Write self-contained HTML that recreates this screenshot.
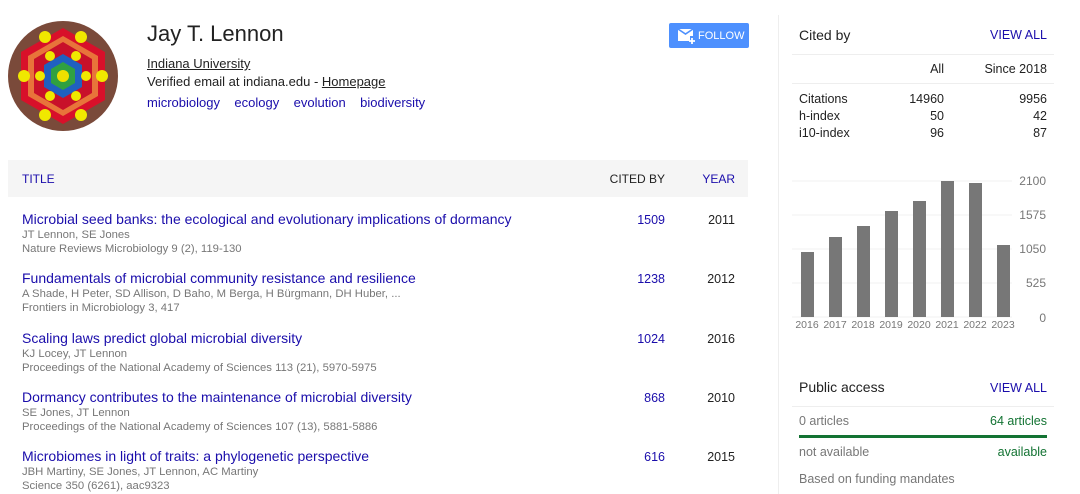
<!DOCTYPE html>
<html><head><meta charset="utf-8"><style>
*{margin:0;padding:0;box-sizing:border-box}
body{width:1080px;height:494px;overflow:hidden;background:#fff;font-family:"Liberation Sans",Arial,sans-serif;position:relative;color:#222}
.a{position:absolute;white-space:nowrap}
.blue{color:#1a0dab}
.t{font-size:14px;color:#1a0dab;line-height:18px}
.s{font-size:11.3px;color:#777;line-height:14px}
.n{font-size:12.5px;line-height:16px}
.r{font-size:12.5px;line-height:16px;color:#222}
</style></head><body>
<svg class="a" style="left:7px;top:20px" width="112" height="112" viewBox="0 0 112 112">
<defs><clipPath id="c"><circle cx="56" cy="56" r="55"/></clipPath></defs>
<g clip-path="url(#c)">
<rect width="112" height="112" fill="#7a4a3a"/>
<polygon points="56,8 98,32 98,80 56,104 14,80 14,32" fill="#d8102a"/>
<polygon points="56,16 91,36 91,76 56,96 21,76 21,36" fill="#e8743a"/>
<polygon points="56,22 85,39 85,73 56,90 27,73 27,39" fill="#c8102a"/>
<polygon points="56,34 75,45 75,67 56,78 37,67 37,45" fill="#2060c0"/>
<polygon points="56,42 68,49 68,63 56,70 44,63 44,49" fill="#30a040"/>
<circle cx="56" cy="56" r="6" fill="#f0e000"/>
<g fill="#f0e800">
<circle cx="43" cy="36" r="5"/><circle cx="69" cy="36" r="5"/><circle cx="43" cy="76" r="5"/><circle cx="69" cy="76" r="5"/>
<circle cx="33" cy="56" r="5"/><circle cx="79" cy="56" r="5"/>
<circle cx="38" cy="17" r="6"/><circle cx="74" cy="17" r="6"/><circle cx="38" cy="95" r="6"/><circle cx="74" cy="95" r="6"/>
<circle cx="17" cy="56" r="6"/><circle cx="95" cy="56" r="6"/>
</g></g></svg>

<div class="a" style="left:147px;top:21px;font-size:22px;color:#222">Jay T. Lennon</div>
<div class="a" style="left:147px;top:56px;font-size:13px;color:#222;text-decoration:underline">Indiana University</div>
<div class="a" style="left:147px;top:74px;font-size:13px;color:#222">Verified email at indiana.edu - <span style="text-decoration:underline">Homepage</span></div>
<div class="a" style="left:147px;top:95px;font-size:13px;color:#1a0dab">microbiology&nbsp;&nbsp;&nbsp; ecology&nbsp;&nbsp;&nbsp; evolution&nbsp;&nbsp;&nbsp; biodiversity</div>

<div class="a" style="left:669px;top:23px;width:80px;height:25px;background:#4d90fe;border-radius:2px"></div>
<svg class="a" style="left:677px;top:27px" width="20" height="18" viewBox="0 0 20 18"><path d="M1 2h15v7h-3v5H1z" fill="#fff"/><path d="M1 2l7.5 5L16 2" fill="none" stroke="#4d90fe" stroke-width="1.6"/><path d="M15 11v6M12 14h6" stroke="#fff" stroke-width="1.8"/></svg>
<div class="a" style="left:698px;top:30px;font-size:11px;color:#fff">FOLLOW</div>

<div class="a" style="left:8px;top:160px;width:740px;height:37px;background:#f5f5f5"></div>
<div class="a" style="left:22px;top:172px;font-size:12px;color:#1a0dab">TITLE</div>
<div class="a" style="left:600px;top:172px;width:65px;text-align:right;font-size:12px;color:#222">CITED BY</div>
<div class="a" style="left:680px;top:172px;width:55px;text-align:right;font-size:12px;color:#1a0dab">YEAR</div>

<div class="a t" style="left:22px;top:210px">Microbial seed banks: the ecological and evolutionary implications of dormancy</div>
<div class="a s" style="left:22px;top:228px">JT Lennon, SE Jones</div>
<div class="a s" style="left:22px;top:242px">Nature Reviews Microbiology 9 (2), 119-130</div>
<div class="a n blue" style="left:600px;top:212px;width:65px;text-align:right">1509</div>
<div class="a r" style="left:680px;top:212px;width:55px;text-align:right">2011</div>

<div class="a t" style="left:22px;top:269px">Fundamentals of microbial community resistance and resilience</div>
<div class="a s" style="left:22px;top:287px">A Shade, H Peter, SD Allison, D Baho, M Berga, H Bürgmann, DH Huber, ...</div>
<div class="a s" style="left:22px;top:301px">Frontiers in Microbiology 3, 417</div>
<div class="a n blue" style="left:600px;top:271px;width:65px;text-align:right">1238</div>
<div class="a r" style="left:680px;top:271px;width:55px;text-align:right">2012</div>

<div class="a t" style="left:22px;top:329px">Scaling laws predict global microbial diversity</div>
<div class="a s" style="left:22px;top:347px">KJ Locey, JT Lennon</div>
<div class="a s" style="left:22px;top:361px">Proceedings of the National Academy of Sciences 113 (21), 5970-5975</div>
<div class="a n blue" style="left:600px;top:331px;width:65px;text-align:right">1024</div>
<div class="a r" style="left:680px;top:331px;width:55px;text-align:right">2016</div>

<div class="a t" style="left:22px;top:388px">Dormancy contributes to the maintenance of microbial diversity</div>
<div class="a s" style="left:22px;top:406px">SE Jones, JT Lennon</div>
<div class="a s" style="left:22px;top:420px">Proceedings of the National Academy of Sciences 107 (13), 5881-5886</div>
<div class="a n blue" style="left:600px;top:390px;width:65px;text-align:right">868</div>
<div class="a r" style="left:680px;top:390px;width:55px;text-align:right">2010</div>

<div class="a t" style="left:22px;top:447px">Microbiomes in light of traits: a phylogenetic perspective</div>
<div class="a s" style="left:22px;top:465px">JBH Martiny, SE Jones, JT Lennon, AC Martiny</div>
<div class="a s" style="left:22px;top:479px">Science 350 (6261), aac9323</div>
<div class="a n blue" style="left:600px;top:449px;width:65px;text-align:right">616</div>
<div class="a r" style="left:680px;top:449px;width:55px;text-align:right">2015</div>

<div class="a" style="left:778px;top:15px;width:1px;height:479px;background:#eee"></div>

<div class="a" style="left:799px;top:27px;font-size:14px;color:#222">Cited by</div>
<div class="a" style="left:960px;top:28px;width:87px;text-align:right;font-size:12.5px;color:#1a0dab">VIEW ALL</div>
<div class="a" style="left:792px;top:54px;width:262px;height:1px;background:#eee"></div>
<div class="a r" style="left:880px;top:61px;width:64px;text-align:right">All</div>
<div class="a r" style="left:960px;top:61px;width:87px;text-align:right">Since 2018</div>
<div class="a" style="left:792px;top:83px;width:262px;height:1px;background:#eee"></div>
<div class="a r" style="left:799px;top:91px">Citations</div>
<div class="a r" style="left:880px;top:91px;width:64px;text-align:right">14960</div>
<div class="a r" style="left:960px;top:91px;width:87px;text-align:right">9956</div>
<div class="a r" style="left:799px;top:108px">h-index</div>
<div class="a r" style="left:880px;top:108px;width:64px;text-align:right">50</div>
<div class="a r" style="left:960px;top:108px;width:87px;text-align:right">42</div>
<div class="a r" style="left:799px;top:125px">i10-index</div>
<div class="a r" style="left:880px;top:125px;width:64px;text-align:right">96</div>
<div class="a r" style="left:960px;top:125px;width:87px;text-align:right">87</div>

<svg class="a" style="left:780px;top:160px" width="300" height="180">
<g stroke="#f2f2f2" stroke-width="1"><line x1="12" y1="21" x2="232" y2="21"/><line x1="12" y1="55" x2="232" y2="55"/><line x1="12" y1="89" x2="232" y2="89"/><line x1="12" y1="123" x2="232" y2="123"/><line x1="12" y1="157" x2="232" y2="157"/></g>
<g fill="#777">
<rect x="21" y="92" width="13" height="65"/>
<rect x="49" y="77" width="13" height="80"/>
<rect x="77" y="66" width="13" height="91"/>
<rect x="105" y="51" width="13" height="106"/>
<rect x="133" y="41" width="13" height="116"/>
<rect x="161" y="21" width="13" height="136"/>
<rect x="189" y="23" width="13" height="134"/>
<rect x="217" y="85" width="13" height="72"/>
</g>
<g font-family="Liberation Sans,Arial,sans-serif" font-size="10.5" fill="#777" text-anchor="middle">
<text x="27" y="168">2016</text><text x="55" y="168">2017</text><text x="83" y="168">2018</text><text x="111" y="168">2019</text><text x="139" y="168">2020</text><text x="167" y="168">2021</text><text x="195" y="168">2022</text><text x="223" y="168">2023</text>
</g>
<g font-family="Liberation Sans,Arial,sans-serif" font-size="12" fill="#777" text-anchor="end">
<text x="266" y="25">2100</text><text x="266" y="59">1575</text><text x="266" y="93">1050</text><text x="266" y="127">525</text><text x="266" y="162">0</text>
</g></svg>

<div class="a" style="left:799px;top:379px;font-size:14px;color:#222">Public access</div>
<div class="a" style="left:960px;top:381px;width:87px;text-align:right;font-size:12.5px;color:#1a0dab">VIEW ALL</div>
<div class="a" style="left:792px;top:406px;width:262px;height:1px;background:#eee"></div>
<div class="a" style="left:799px;top:414px;font-size:12.5px;color:#777">0 articles</div>
<div class="a" style="left:940px;top:414px;width:107px;text-align:right;font-size:12.5px;color:#137333">64 articles</div>
<div class="a" style="left:799px;top:435px;width:248px;height:3px;background:#137333"></div>
<div class="a" style="left:799px;top:445px;font-size:12.5px;color:#777">not available</div>
<div class="a" style="left:940px;top:445px;width:107px;text-align:right;font-size:12.5px;color:#137333">available</div>
<div class="a" style="left:799px;top:472px;font-size:12.5px;color:#777">Based on funding mandates</div>
</body></html>
